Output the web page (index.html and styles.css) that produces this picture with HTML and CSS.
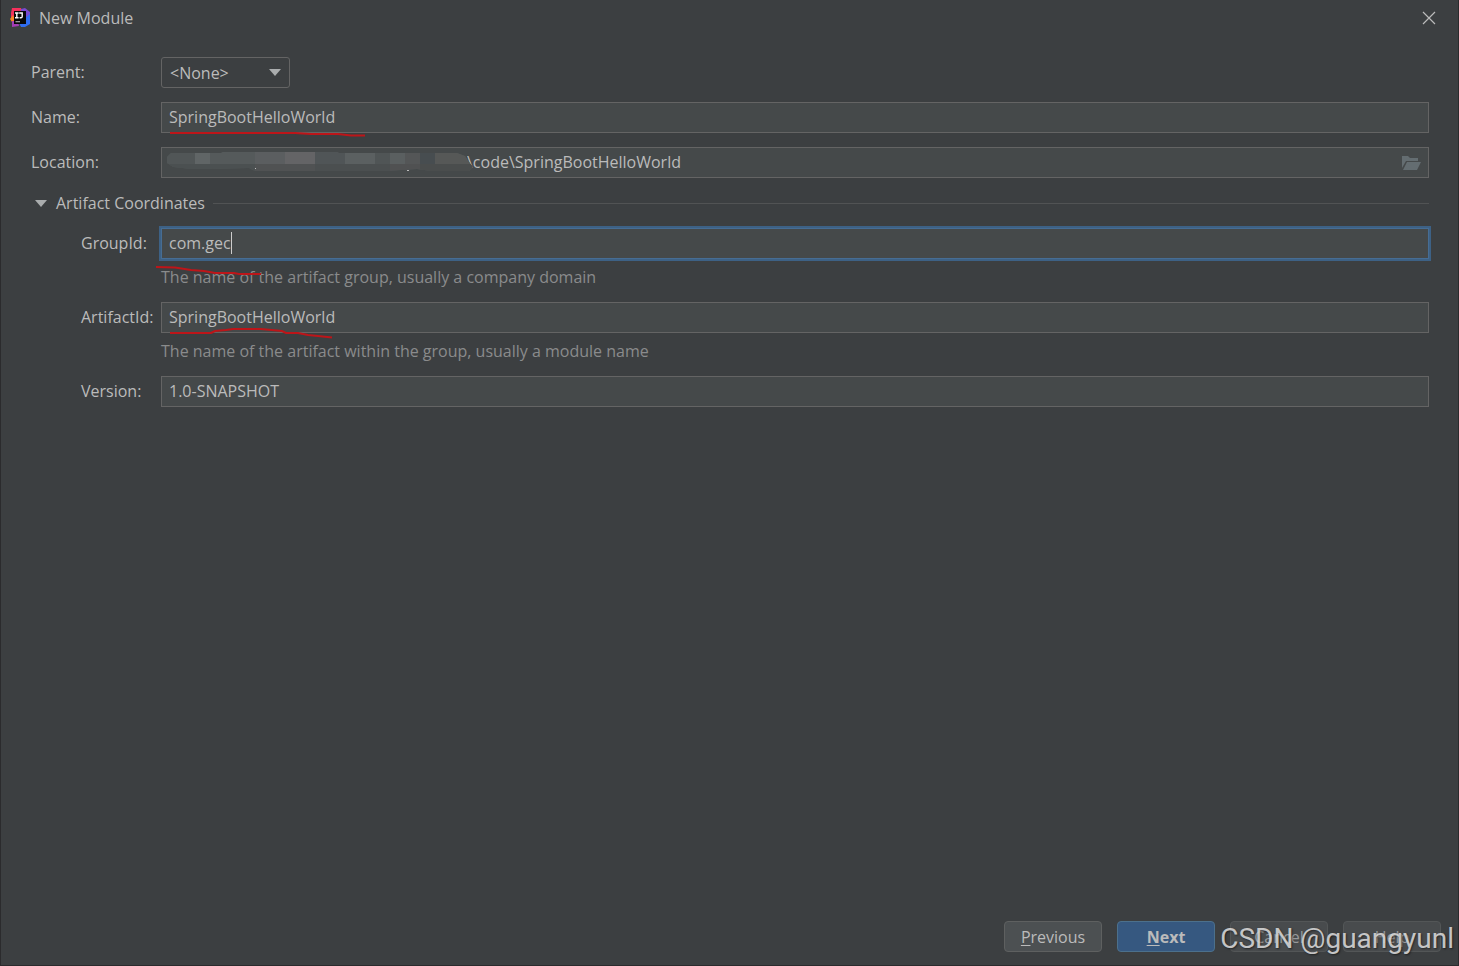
FILE: index.html
```
<!DOCTYPE html>
<html lang="en">
<head>
    <meta charset="UTF-8">
    <meta name="viewport" content="width=device-width, initial-scale=1.0">
    <title>New Module</title>
    <link rel="stylesheet" href="styles.css">
</head>
<body>
    <div class="dialog">
        <header class="title-bar">
            <svg class="app-icon" viewBox="0 0 20 20" aria-hidden="true">
                <path fill="#f5305c" d="M2 0 11 0 13 6 7 13 1 11 1 5z"/>
                <path fill="#f98324" d="M0 11 3 7 6 14 2 14z"/>
                <path fill="#a43cb4" d="M2 13 8 13 9 18 2 19z"/>
                <path fill="#7a4ad0" d="M11 1 15 0 20 4 20 11 10 7z"/>
                <path fill="#2f6df0" d="M20 6 20 16 15 19 11 19 9 15z"/>
                <rect x="4" y="3" width="12" height="13" fill="#080808"/>
                <path fill="none" stroke="#fff" stroke-width="1.4" d="M5 5h3.600M6.800 5v5M5 9.700h3.600M9.200 5h3v3.400q0 1.300-1.300 1.300h-1.300"/>
                <path stroke="#aaa" stroke-width="1.2" d="M5.500 13.700h4.500"/>
            </svg>
            <h1 class="title">New Module</h1>
            <button class="close-btn" aria-label="Close">
                <svg viewBox="0 0 12 12"><path d="M0 0 12 12M12 0 0 12"/></svg>
            </button>
        </header>

        <form class="form">
            <div class="row">
                <label class="label" for="parent">Parent:</label>
                <div class="select-box">
                    <select id="parent" class="select">
                        <option>&lt;None&gt;</option>
                    </select>
                    <svg class="select-arrow" viewBox="0 0 12 7"><path d="M0 0h12L6 7z"/></svg>
                </div>
            </div>

            <div class="row">
                <label class="label" for="name">Name:</label>
                <div class="field">
                    <input type="text" id="name" class="input" value="SpringBootHelloWorld">
                    <svg class="mark" viewBox="0 0 220 46"><path d="M9 31 134 31 150 32 177 32 190 33.500 204 33.500"/></svg>
                </div>
            </div>

            <div class="row">
                <label class="label" for="location">Location:</label>
                <div class="field">
                    <input type="text" id="location" class="input input-location" value="\code\SpringBootHelloWorld">
                    <!-- blurred out part of the path -->
                    <svg class="mosaic" viewBox="0 0 312 31" aria-hidden="true">
                        <clipPath id="smudge">
                            <path d="M10 6 60 6 62 5 176 5 178 6 296 6 304 9 308 15 312 20 308 24 270 24 256 22 225 24 120 24 94 24 88 21 50 22 30 22 12 20 6 16 6 10z"/>
                        </clipPath>
                        <g clip-path="url(#smudge)">
                            <rect width="312" height="31" fill="#535859"/>
                            <rect x="6" width="28" height="17" fill="#515657"/>
                            <rect x="34" width="15" height="17" fill="#606566"/>
                            <rect x="49" width="45" height="17" fill="#555a5b"/>
                            <rect x="94" width="30" height="17" fill="#5b5e60"/>
                            <rect x="124" width="30" height="17" fill="#646466"/>
                            <rect x="154" width="30" height="17" fill="#505557"/>
                            <rect x="184" width="30" height="17" fill="#5b6061"/>
                            <rect x="214" width="15" height="17" fill="#505556"/>
                            <rect x="229" width="15" height="17" fill="#5a5f60"/>
                            <rect x="244" width="15" height="17" fill="#545657"/>
                            <rect x="259" width="15" height="17" fill="#474d50"/>
                            <rect x="274" width="38" height="17" fill="#565857"/>
                            <rect y="17" width="94" height="14" fill="#4b5051"/>
                            <rect x="94" y="17" width="60" height="14" fill="#505253"/>
                            <rect x="154" y="17" width="75" height="14" fill="#4b4f50"/>
                            <rect x="229" y="17" width="30" height="14" fill="#505152"/>
                            <rect x="259" y="17" width="53" height="14" fill="#4a4d4d"/>
                        </g>
                        <path fill="#bbb" d="M94 21h1v1h-1zM246 23h2v1h-2z"/>
                    </svg>
                    <button type="button" class="browse-btn" aria-label="Browse">
                        <svg viewBox="0 0 19 15"><path d="M0 0h6l2 2h8v3H4L0 12zM5 6h14l-4 8H1z"/></svg>
                    </button>
                </div>
            </div>

            <div class="section">
                <svg class="section-arrow" viewBox="0 0 12 7"><path d="M0 0h12L6 7z"/></svg>
                <h2 class="section-title">Artifact Coordinates</h2>
                <div class="section-line"></div>
            </div>

            <div class="row row-nested row-hinted">
                <label class="label" for="group-id">GroupId:</label>
                <div class="field">
                    <input type="text" id="group-id" class="input input-focused" value="com.gec">
                    <span class="caret"></span>
                    <svg class="mark mark-group" viewBox="0 0 220 46"><path d="M15 39 34 39.500 50 42 63 43 74 45 93 45 98 46 120 46"/></svg>
                </div>
            </div>
            <p class="hint">The name of the artifact group, usually a company domain</p>

            <div class="row row-nested row-hinted">
                <label class="label" for="artifact-id">ArtifactId:</label>
                <div class="field">
                    <input type="text" id="artifact-id" class="input" value="SpringBootHelloWorld">
                    <svg class="mark" viewBox="0 0 220 46"><path d="M9 31 50 31 54 29 65 28 72 27 100 27 121 29 125 31 137 31 147 33 157 34 171 35.500"/></svg>
                </div>
            </div>
            <p class="hint">The name of the artifact within the group, usually a module name</p>

            <div class="row row-nested">
                <label class="label" for="version">Version:</label>
                <div class="field">
                    <input type="text" id="version" class="input" value="1.0-SNAPSHOT">
                </div>
            </div>
        </form>

        <footer class="footer">
            <button class="btn"><u>P</u>revious</button>
            <button class="btn btn-primary"><u>N</u>ext</button>
            <button class="btn btn-faded">Cancel</button>
            <button class="btn btn-faded">Help</button>
            <div class="watermark">CSDN @guangyunl</div>
        </footer>
    </div>
</body>
</html>
```
FILE: styles.css
```
* {
    margin: 0;
    padding: 0;
    box-sizing: border-box;
}

body {
    font-family: "Open Sans", "Noto Sans", sans-serif;
    font-size: 16px;
    line-height: 20px;
    background: #3c3f41;
    color: #bbb;
}

button,
input,
select {
    font: inherit;
    color: inherit;
}

.dialog {
    display: flex;
    flex-direction: column;
    min-height: 100vh;
    border: 1px solid #2b2b2d;
    border-top: none;
}

/* Title bar */
.title-bar {
    display: flex;
    align-items: center;
    height: 36px;
    padding: 0 20px 0 9px;
}

.app-icon {
    width: 20px;
    height: 20px;
    margin-right: 9px;
}

.title {
    flex: 1;
    font-size: 16px;
    font-weight: 400;
}

.close-btn {
    display: flex;
    padding: 3px;
    background: none;
    border: none;
}

.close-btn svg {
    width: 12px;
    height: 12px;
    overflow: visible;
    stroke: #bbb;
    stroke-width: 1.2;
}

/* Form */
.form {
    flex: 1;
    padding: 21px 29px 20px 30px;
}

.row {
    display: flex;
    align-items: center;
    margin-bottom: 14px;
}

.row-nested {
    padding-left: 50px;
}

.row-hinted {
    margin-bottom: 8px;
}

.label {
    flex: none;
    width: 130px;
    padding-bottom: 1px;
}

.row-nested .label {
    width: 80px;
}

.field {
    position: relative;
    flex: 1;
}

.input {
    display: block;
    width: 100%;
    height: 31px;
    padding: 0 8px 1px 7px;
    background: #45494a;
    border: 1px solid #646464;
    outline: none;
}

.input-location {
    padding-left: 305px;
}

.input-focused {
    border-color: #466d94;
    box-shadow: 0 0 0 2px #3d6185;
}

.select-box {
    position: relative;
    width: 129px;
}

.select {
    display: block;
    appearance: none;
    width: 100%;
    height: 31px;
    padding: 0 30px 0 8px;
    background: #3c3f41;
    border: 1px solid #646464;
    border-radius: 3px;
}

.select-arrow,
.section-arrow {
    width: 12px;
    height: 7px;
    fill: #aaadae;
}

.select-arrow {
    position: absolute;
    top: 12px;
    right: 9px;
    pointer-events: none;
}

.browse-btn {
    position: absolute;
    top: 9px;
    right: 8px;
    display: flex;
    background: none;
    border: none;
}

.browse-btn svg {
    width: 19px;
    height: 15px;
    fill: #646d71;
}

.mosaic {
    position: absolute;
    top: 0;
    left: 0;
    width: 312px;
    height: 31px;
    pointer-events: none;
}

.caret {
    position: absolute;
    top: 4px;
    left: 70px;
    width: 1px;
    height: 22px;
    background: #ccc;
}

/* Red pen strokes */
.mark {
    position: absolute;
    top: 0;
    left: 0;
    z-index: 1;
    width: 220px;
    height: 46px;
    overflow: visible;
    fill: none;
    stroke: #bd1519;
    stroke-width: 2;
    pointer-events: none;
}

.mark-group {
    left: -20px;
}

.section {
    display: flex;
    align-items: center;
    margin: 15px 0;
    padding-left: 4px;
}

.section-title {
    margin: 0 8px 0 9px;
    font-size: 16px;
    font-weight: 400;
}

.section-line {
    flex: 1;
    height: 1px;
    background: #515354;
}

.hint {
    margin: 0 0 15px 130px;
    color: #8a8b8c;
}

/* Buttons */
.footer {
    position: relative;
    display: flex;
    justify-content: flex-end;
    gap: 15px;
    padding: 0 17px 13px;
}

.btn {
    width: 98px;
    height: 31px;
    background: #4c5052;
    border: 1px solid #5e6060;
    border-radius: 4px;
}

.btn u {
    text-underline-offset: 2px;
}

.btn-primary {
    background: #365880;
    border-color: #4c708c;
    font-weight: 700;
}

.btn-faded {
    background: #484b4d;
    border-color: #535657;
    color: #979a9c;
}

.watermark {
    position: absolute;
    right: 4px;
    bottom: 8px;
    font-family: Roboto, "Liberation Sans", sans-serif;
    font-size: 28px;
    line-height: 36px;
    color: rgba(225, 225, 225, 0.85);
    text-shadow: 1px 1px 2px rgba(0, 0, 0, 0.5);
    pointer-events: none;
}
```
